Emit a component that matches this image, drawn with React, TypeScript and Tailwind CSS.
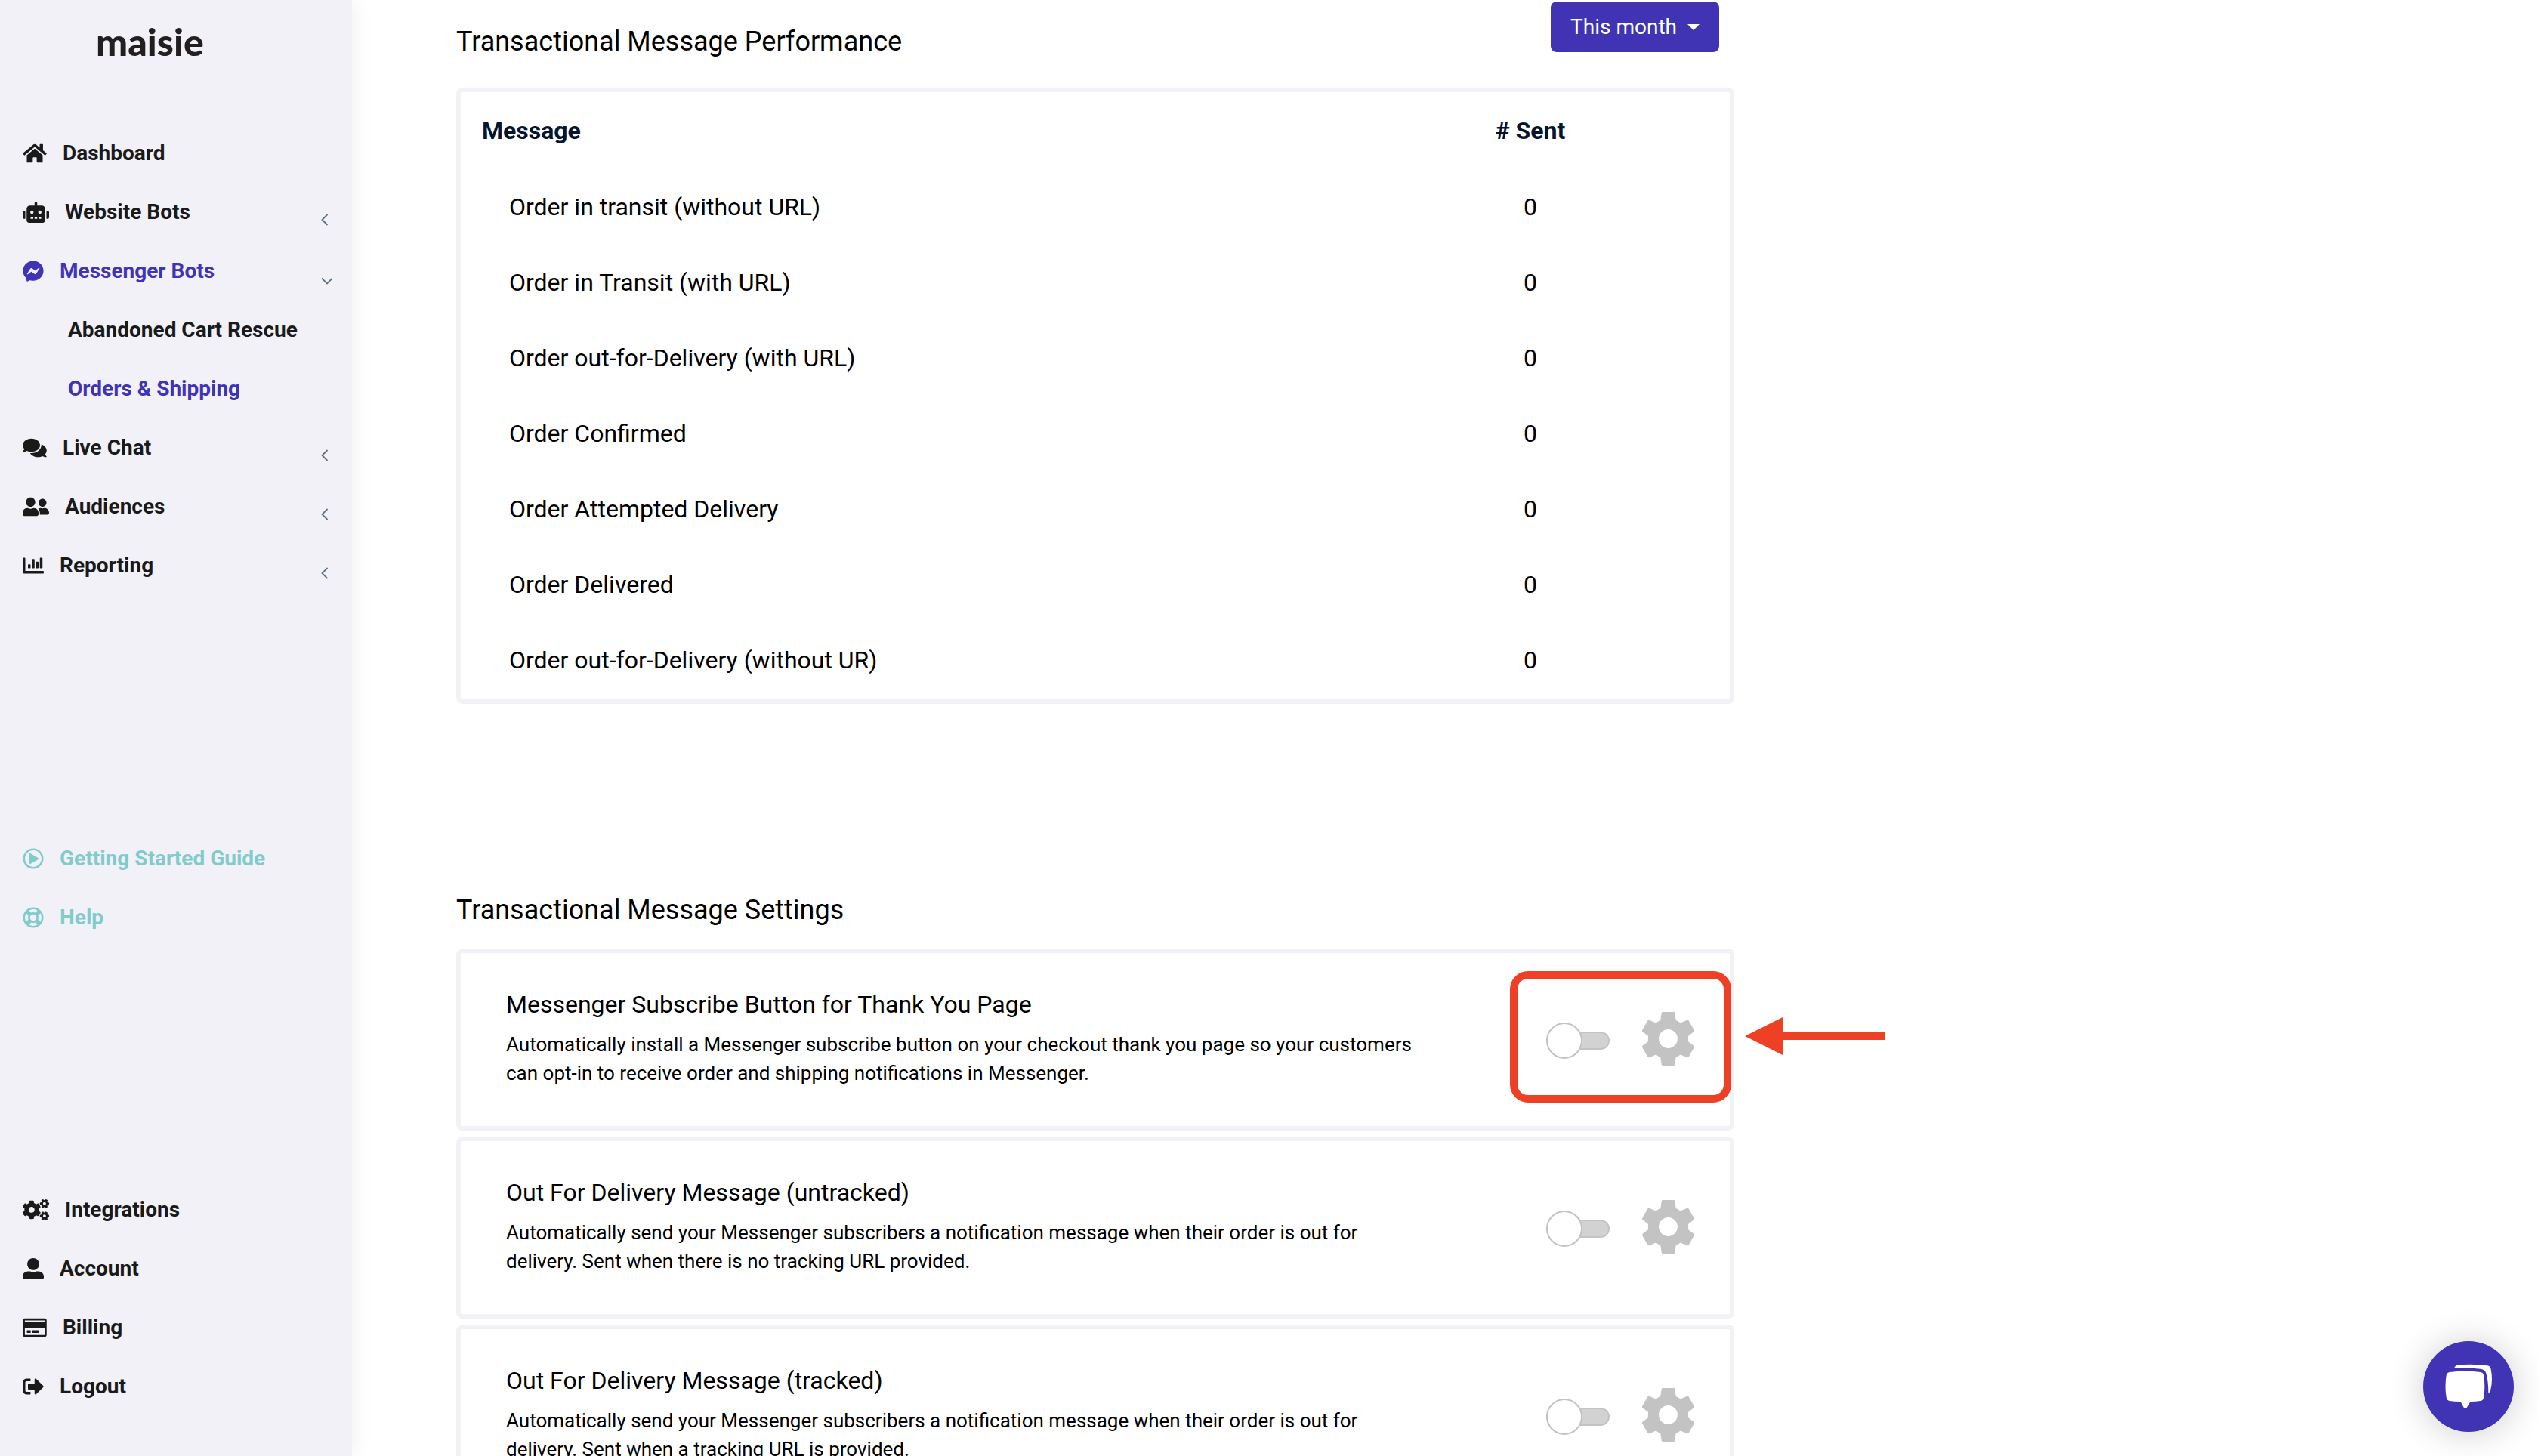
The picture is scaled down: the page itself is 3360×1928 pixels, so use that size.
import React, { useState } from 'react';
import {
  FaHome,
  FaRobot,
  FaFacebookMessenger,
  FaComments,
  FaUserFriends,
  FaChartBar,
  FaRegPlayCircle,
  FaRegLifeRing,
  FaCogs,
  FaUserAlt,
  FaRegCreditCard,
  FaSignOutAlt,
} from 'react-icons/fa';

interface NavItem {
  label: string;
  icon?: React.ReactNode;
  arrow?: 'left' | 'down';
  color?: string;
}

const mainNav: NavItem[] = [
  { label: 'Dashboard', icon: <FaHome className="w-8 h-7" /> },
  { label: 'Website Bots', icon: <FaRobot className="w-[35px] h-7" />, arrow: 'left' },
  { label: 'Messenger Bots', icon: <FaFacebookMessenger className="w-7 h-7" />, arrow: 'down', color: 'text-[#4034b4]' },
  { label: 'Abandoned Cart Rescue' },
  { label: 'Orders & Shipping', color: 'text-[#4034b4]' },
  { label: 'Live Chat', icon: <FaComments className="w-8 h-7" />, arrow: 'left' },
  { label: 'Audiences', icon: <FaUserFriends className="w-[35px] h-7" />, arrow: 'left' },
  { label: 'Reporting', icon: <FaChartBar className="w-7 h-7" />, arrow: 'left' },
];

const helpNav: NavItem[] = [
  { label: 'Getting Started Guide', icon: <FaRegPlayCircle className="w-7 h-7" />, color: 'text-[#80cbcb]' },
  { label: 'Help', icon: <FaRegLifeRing className="w-7 h-7" />, color: 'text-[#80cbcb]' },
];

const accountNav: NavItem[] = [
  { label: 'Integrations', icon: <FaCogs className="w-[35px] h-7" /> },
  { label: 'Account', icon: <FaUserAlt className="w-7 h-7" /> },
  { label: 'Billing', icon: <FaRegCreditCard className="w-8 h-7" /> },
  { label: 'Logout', icon: <FaSignOutAlt className="w-7 h-7" /> },
];

const messages = [
  { name: 'Order in transit (without URL)', sent: 0 },
  { name: 'Order in Transit (with URL)', sent: 0 },
  { name: 'Order out-for-Delivery (with URL)', sent: 0 },
  { name: 'Order Confirmed', sent: 0 },
  { name: 'Order Attempted Delivery', sent: 0 },
  { name: 'Order Delivered', sent: 0 },
  { name: 'Order out-for-Delivery (without UR)', sent: 0 },
];

const settings = [
  {
    title: 'Messenger Subscribe Button for Thank You Page',
    text: 'Automatically install a Messenger subscribe button on your checkout thank you page so your customers can opt-in to receive order and shipping notifications in Messenger.',
    highlighted: true,
  },
  {
    title: 'Out For Delivery Message (untracked)',
    text: 'Automatically send your Messenger subscribers a notification message when their order is out for delivery. Sent when there is no tracking URL provided.',
  },
  {
    title: 'Out For Delivery Message (tracked)',
    text: 'Automatically send your Messenger subscribers a notification message when their order is out for delivery. Sent when a tracking URL is provided.',
  },
];

const Chevron: React.FC<{ direction: 'left' | 'down' }> = ({ direction }) => (
  <svg viewBox="0 0 16 16" className="w-4 h-4 mt-5 ml-auto text-[#5f7085]" fill="none" stroke="currentColor" strokeWidth="1.8">
    <path d={direction === 'left' ? 'M8.5 1L1.5 8l7 7' : 'M1 7.5l7 7 7-7'} />
  </svg>
);

const GearIcon = () => (
  <svg viewBox="2 2 20 20" className="w-[71px] h-[71px]" fill="currentColor">
    <path d="M19.43 12.98c.04-.32.07-.64.07-.98s-.03-.66-.07-.98l2.11-1.65c.19-.15.24-.42.12-.64l-2-3.46c-.12-.22-.39-.3-.61-.22l-2.49 1c-.52-.4-1.08-.73-1.69-.98l-.38-2.65C14.46 2.18 14.25 2 14 2h-4c-.25 0-.46.18-.49.42l-.38 2.65c-.61.25-1.17.59-1.69.98l-2.49-1c-.23-.09-.49 0-.61.22l-2 3.46c-.13.22-.07.49.12.64l2.11 1.65c-.04.32-.07.65-.07.98s.03.66.07.98l-2.11 1.65c-.19.15-.24.42-.12.64l2 3.46c.12.22.39.3.61.22l2.49-1c.52.4 1.08.73 1.69.98l.38 2.65c.03.24.24.42.49.42h4c.25 0 .46-.18.49-.42l.38-2.65c.61-.25 1.17-.59 1.69-.98l2.49 1c.23.09.49 0 .61-.22l2-3.46c.12-.22.07-.49-.12-.64l-2.11-1.65zM12 15.5c-1.93 0-3.5-1.57-3.5-3.5s1.57-3.5 3.5-3.5 3.5 1.57 3.5 3.5-1.57 3.5-3.5 3.5z" />
  </svg>
);

const NavGroup: React.FC<{ items: NavItem[] }> = ({ items }) => (
  <ul>
    {items.map((item) => (
      <li key={item.label}>
        <a
          href="#"
          className={`flex items-center h-[78px] pr-[25px] gap-[21px] text-[28px] font-bold ${item.icon ? 'pl-[30px]' : 'pl-[90px]'} ${item.color ?? 'text-[#1a1a1a]'}`}
        >
          {item.icon}
          <span>{item.label}</span>
          {item.arrow && <Chevron direction={item.arrow} />}
        </a>
      </li>
    ))}
  </ul>
);

const Toggle: React.FC<{ label: string }> = ({ label }) => {
  const [checked, setChecked] = useState(false);

  return (
    <label className="relative flex items-center w-[84px] h-12 mt-1 cursor-pointer">
      <input
        type="checkbox"
        aria-label={label}
        checked={checked}
        onChange={(e) => setChecked(e.target.checked)}
        className="peer sr-only"
      />
      <span className="w-full h-6 rounded-full border-2 border-[#c3c3c3] bg-[#d2d2d2] peer-checked:bg-[#4034b4]" />
      <span className="absolute left-0 top-0 w-12 h-12 rounded-full border-2 border-[#c3c3c3] bg-white peer-checked:left-9" />
    </label>
  );
};

const App: React.FC = () => {
  return (
    <div className="flex h-screen overflow-hidden bg-white text-black font-['Roboto',sans-serif]">
      <aside className="flex flex-col w-[466px] shrink-0 bg-[#f2f1f8] shadow-[0_0_30px_rgba(0,0,0,0.07)]">
        <div className="h-[164px] pl-[127px] pt-[22px]">
          <a href="#" className="text-[50px] leading-[66px] font-black text-[#231f20] font-['Lato',sans-serif]">maisie</a>
        </div>
        <nav className="flex flex-col justify-between flex-1 pb-[53px]">
          <NavGroup items={mainNav} />
          <NavGroup items={helpNav} />
          <NavGroup items={accountNav} />
        </nav>
      </aside>

      <main className="flex-1 pl-[138px] pr-10 overflow-hidden">
        <div className="max-w-[1692px]">
          <section>
            <div className="flex items-start justify-between h-[116px] pt-0.5 pr-5">
              <h2 className="pt-[29px] text-[36px] leading-[48px]">Transactional Message Performance</h2>
              <button className="flex items-center gap-[14px] h-[67px] px-[26px] rounded-lg bg-[#4034b4] text-white text-[28px]">
                This month
                <svg viewBox="0 0 16 8" className="w-4 h-2" fill="currentColor">
                  <path d="M0 0h16L8 8z" />
                </svg>
              </button>
            </div>
            <div className="pb-0.5 border-6 border-[#f2f1f8] rounded-lg">
              <table className="w-full text-[32px]">
                <thead>
                  <tr className="h-[102px] text-[#04152d]">
                    <th className="pl-7 text-left font-bold">Message</th>
                    <th className="w-[528px] text-center font-bold"># Sent</th>
                  </tr>
                </thead>
                <tbody>
                  {messages.map((message) => (
                    <tr key={message.name} className="h-[100px]">
                      <td className="pl-16">{message.name}</td>
                      <td className="text-center">{message.sent}</td>
                    </tr>
                  ))}
                </tbody>
              </table>
            </div>
          </section>

          <section className="pt-[249px]">
            <h2 className="mb-[27px] text-[36px] leading-[48px]">Transactional Message Settings</h2>
            <div className="flex flex-col gap-2">
              {settings.map((item) => (
                <div
                  key={item.title}
                  className="relative flex items-start justify-between pt-11 pb-[51px] pl-[60px] pr-[46px] border-6 border-[#f2f1f8] rounded-lg"
                >
                  <div className="max-w-[1200px]">
                    <h3 className="mb-[10px] text-[32px] leading-[48px]">{item.title}</h3>
                    <p className="text-[26px] leading-[38px]">{item.text}</p>
                  </div>
                  <div className="flex items-center gap-[42px] pt-[34px]">
                    <Toggle label={item.title} />
                    <button aria-label="Settings" className="text-[#c3c3c3]">
                      <GearIcon />
                    </button>
                  </div>
                  {item.highlighted && (
                    <>
                      <div className="absolute top-6 -right-0.5 w-[293px] h-[174px] border-10 border-[#ee4024] rounded-3xl pointer-events-none" />
                      <svg viewBox="0 0 186 50" className="absolute top-[85px] -right-[206px] w-[186px] h-[50px] text-[#ee4024]" fill="currentColor">
                        <path d="M0 25L50 0v20h136v10H50v20z" />
                      </svg>
                    </>
                  )}
                </div>
              ))}
            </div>
          </section>
        </div>
      </main>

      <button
        aria-label="Open chat"
        className="fixed bottom-8 right-8 flex items-center justify-center w-[120px] h-[120px] rounded-full bg-[#4034b4] shadow-[0_2px_48px_rgba(0,0,0,0.2)]"
      >
        <svg viewBox="0 0 62 60" className="w-[62px] h-[60px]" fill="white">
          <path d="M6 11Q27 8.500 47 11Q50.500 11.500 51.200 15Q53.500 30 51.200 44.500Q50.500 48.500 47 49Q40 50 33.500 50L28.500 58.200Q26.700 60.500 25 58.200L20.500 50Q12 50 6 49Q2.500 48.500 1.700 44.500Q-.7 30 1.700 15Q2.500 11.500 6 11z" />
          <path d="M12 5.500Q13.500 2 17 1.300Q37 -.4 56 2.200Q60 2.800 60.500 6.500Q63.500 20 60.500 33Q59.700 37.500 57.300 39.500Q57.500 24 54.500 13Q53 7.500 47 6.800Q30 4.500 12 5.500z" />
        </svg>
      </button>
    </div>
  );
};

export default App;
